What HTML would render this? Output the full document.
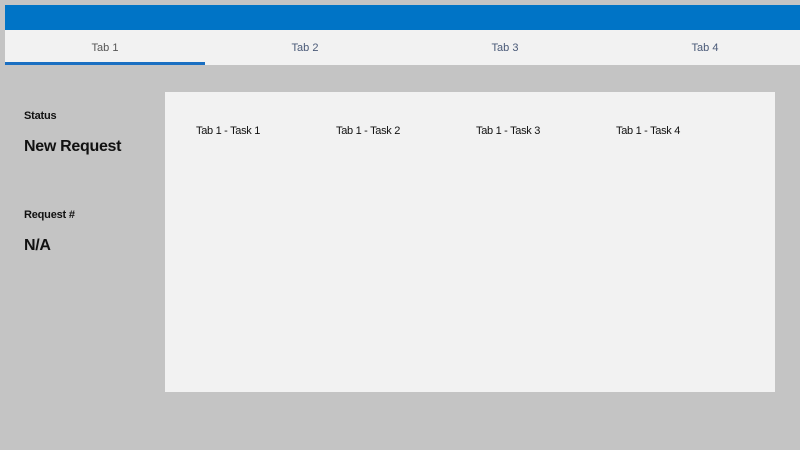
<!DOCTYPE html>
<html><head><style>
body{margin:0;width:800px;height:450px;background:#c4c4c4;font-family:"Liberation Sans",sans-serif;position:relative;overflow:hidden}
.top{position:absolute;left:5px;top:5px;width:795px;height:25px;background:#0074c6}
.tabs{position:absolute;left:5px;top:30px;width:795px;height:35px;background:#f2f2f2}
.tab{position:absolute;top:1px;width:200px;height:35px;line-height:35px;text-align:center;font-size:11px;color:#4a5a78}
.ind{position:absolute;left:5px;top:62px;width:200px;height:3px;background:#1a6fc2}
.lbl{position:absolute;left:24px;font-size:11px;font-weight:bold;color:#111;letter-spacing:-0.2px}
.big{position:absolute;left:24px;font-size:16px;font-weight:bold;color:#111;letter-spacing:-0.3px}
.panel{position:absolute;left:165px;top:92px;width:610px;height:300px;background:#f2f2f2}
.t{position:absolute;top:125px;font-size:11px;color:#111;letter-spacing:-0.3px}
</style></head><body>
<div class="top"></div>
<div class="tabs">
<div class="tab" style="left:0;color:#555">Tab 1</div>
<div class="tab" style="left:200px">Tab 2</div>
<div class="tab" style="left:400px">Tab 3</div>
<div class="tab" style="left:600px">Tab 4</div>
</div>
<div class="ind"></div>
<div class="lbl" style="top:110px">Status</div>
<div class="big" style="top:138px">New Request</div>
<div class="lbl" style="top:209px">Request #</div>
<div class="big" style="top:237px">N/A</div>
<div class="panel"></div>
<div class="t" style="left:196px">Tab 1 - Task 1</div>
<div class="t" style="left:336px">Tab 1 - Task 2</div>
<div class="t" style="left:476px">Tab 1 - Task 3</div>
<div class="t" style="left:616px">Tab 1 - Task 4</div>
</body></html>
